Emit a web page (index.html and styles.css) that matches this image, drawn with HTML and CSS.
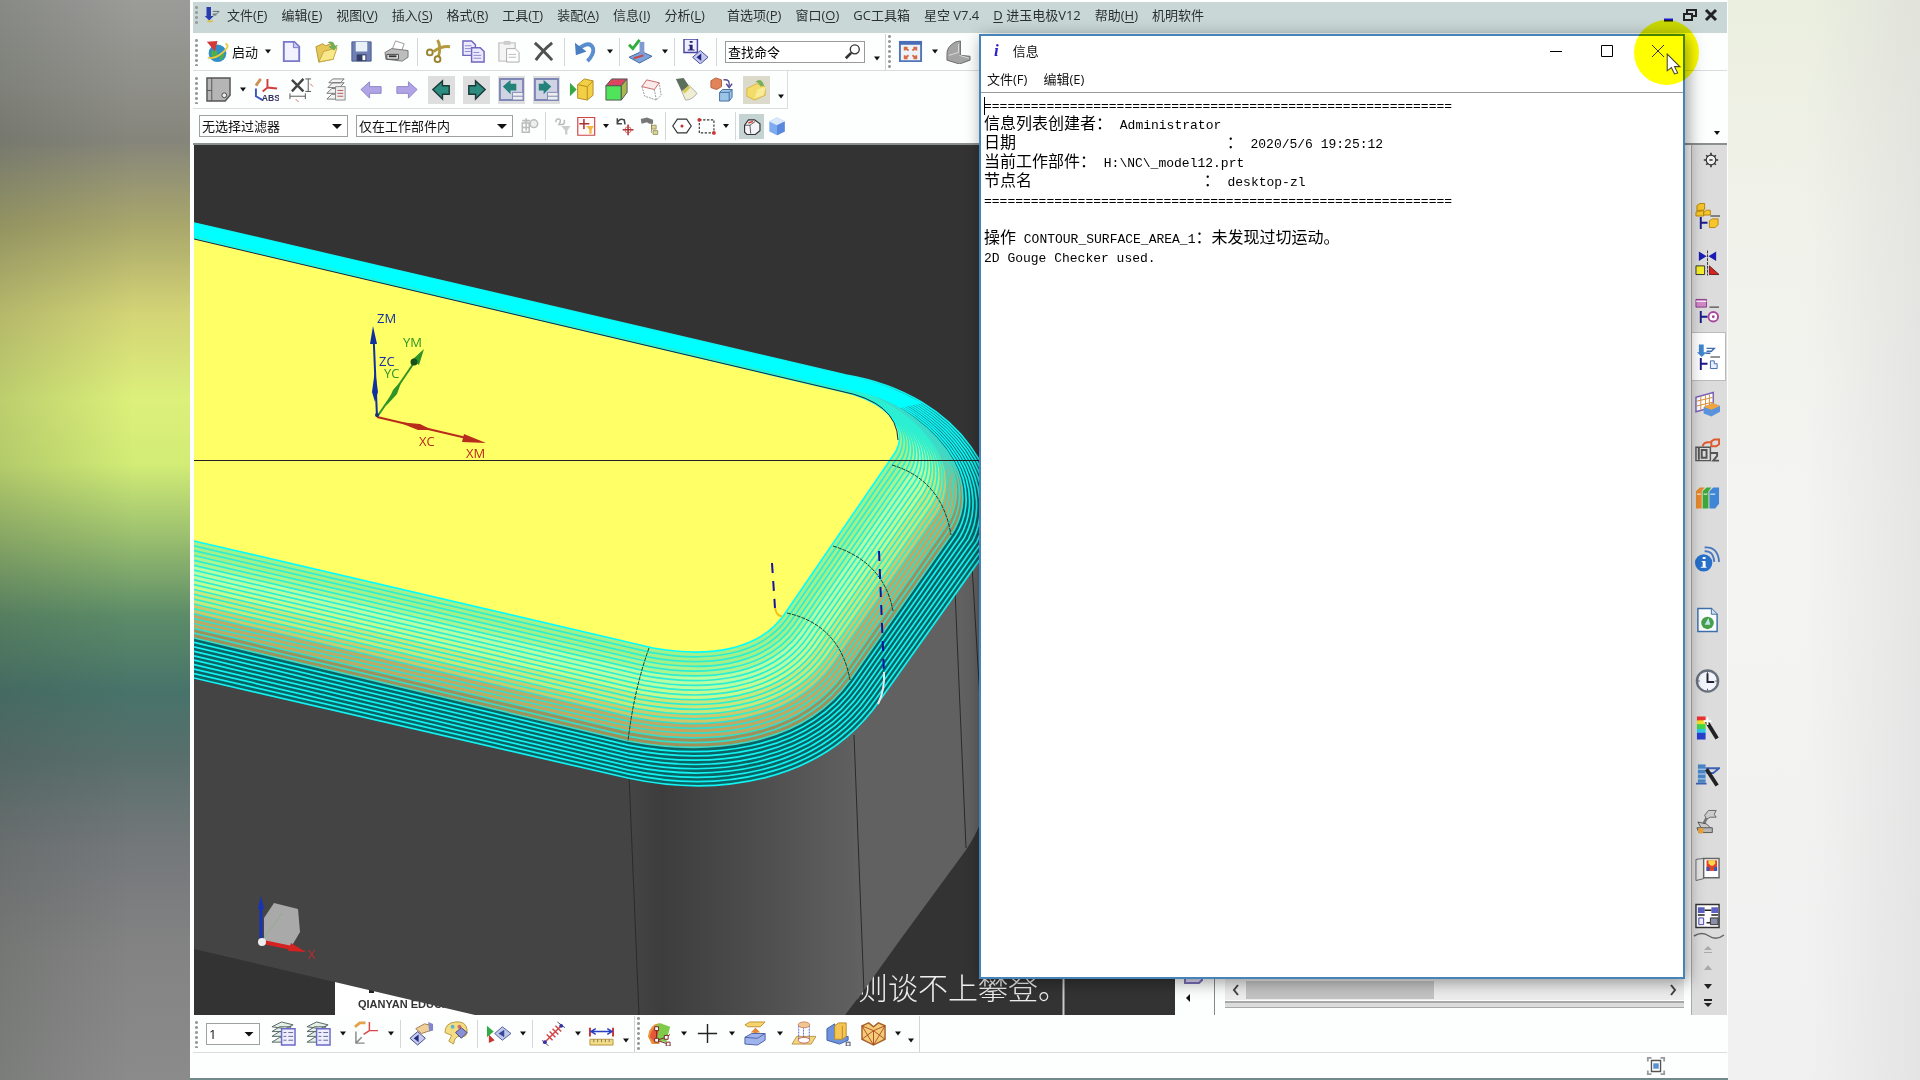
FILE: index.html
```html
<!DOCTYPE html>
<html lang="zh-CN">
<head>
<meta charset="utf-8">
<title>NX 加工</title>
<link rel="stylesheet" href="styles.css">
</head>
<body>
<div class="desk">
<div class="backdrop backdrop-left"></div>
<main class="app">
  <nav class="menubar">
    <i class="grip"></i>
    <svg class="logo" viewBox="0 0 20 20"><path d="M5 1h5v10h3l-5 5-5-5h2z" fill="#2a3cae"/><path d="M12 6h7l-3 3h-4M12 10h4" stroke="#55606e" fill="none"/><path d="M6 17h6" stroke="#d8c040" stroke-width="2"/></svg>
    <a href="#">文件(<u>F</u>)</a><a href="#">编辑(<u>E</u>)</a><a href="#">视图(<u>V</u>)</a><a href="#">插入(<u>S</u>)</a><a href="#">格式(<u>R</u>)</a><a href="#">工具(<u>T</u>)</a><a href="#">装配(<u>A</u>)</a><a href="#">信息(<u>I</u>)</a><a href="#" class="group-end">分析(<u>L</u>)</a><a href="#">首选项(<u>P</u>)</a><a href="#">窗口(<u>O</u>)</a><a href="#">GC工具箱</a><a href="#">星空 V7.4</a><a href="#"><u>D</u> 进玉电极V12</a><a href="#">帮助(<u>H</u>)</a><a href="#">机明软件</a>
    <div class="mdi">
      <button aria-label="最小化"><svg viewBox="0 0 14 14"><path d="M2 12h9" stroke="#1a1ac8" stroke-width="3"/></svg></button>
      <button aria-label="还原"><svg viewBox="0 0 14 14"><path d="M4 5V2h9v6h-3M1 6h8v6H1z" fill="none" stroke="#222" stroke-width="2"/></svg></button>
      <button aria-label="关闭"><svg viewBox="0 0 14 14"><path d="M2 2l10 10M12 2L2 12" stroke="#222" stroke-width="3"/></svg></button>
    </div>
  </nav>

  <div class="bar ruled">
    <i class="grip"></i>
    <button class="launch"><svg viewBox="0 0 26 26"><circle cx="13" cy="15" r="10" fill="#2f8fc8"/><path d="M6 13q6-4 7 2t-3 6q-5-2-4-8M15 18l6-4q0 6-5 9z" fill="#4fae48"/><path d="M2 20q8 2 17-6t3-10" stroke="#f0c93c" stroke-width="2" fill="none"/><path d="M1 2l12-1-3 12z" fill="#d23a3a"/></svg>启动<i class="tri"></i></button>
    <button class="tool" aria-label="新建"><svg viewBox="0 0 26 26"><path d="M5 3h11l5 5v15H5z" fill="#f2f2ff" stroke="#7a78c8" stroke-width="2"/><path d="M15 3v6h6" fill="#c9c9f5" stroke="#7a78c8"/></svg></button>
    <button class="tool" aria-label="打开"><svg viewBox="0 0 26 26"><path d="M2 8l7-3 3 2 8-3v17l-15 3z" fill="#e5c75a" stroke="#b79733"/><path d="M5 24l5-11 14-4-4 12z" fill="#f8e889" stroke="#c5a743"/><path d="M14 4q5-4 8 3l3-1-4 6-6-4 3-1q-1-3-4-3" fill="#72ad52"/></svg></button>
    <button class="tool" aria-label="保存"><svg viewBox="0 0 26 26"><path d="M3 3h20v20H3z" fill="#6f7fb4" stroke="#475b92"/><path d="M7 3h12v10H7z" fill="#e8f2f8"/><path d="M8 16h10v7H8z" fill="#333e66"/><path d="M14 17h3v5h-3z" fill="#fff"/></svg></button>
    <button class="tool" aria-label="打印"><svg viewBox="0 0 26 26"><path d="M8 12l4-10 9 3-3 8z" fill="#fff" stroke="#999"/><path d="M1 14l7-4 17 2v7l-6 4-17-2z" fill="#bdbdbd" stroke="#777"/><path d="M3 16h12v5H3z" fill="#eee" stroke="#444"/><path d="M5 18h8" stroke="#333" stroke-width="2"/></svg></button>
    <i class="sep"></i>
    <button class="tool" aria-label="剪切"><svg viewBox="0 0 26 26"><path d="M12 1q4 7 1 17M25 8q-9-1-17 5" stroke="#b49a3e" stroke-width="3" fill="none"/><circle cx="4" cy="14" r="3" fill="none" stroke="#9a8330" stroke-width="2"/><circle cx="12" cy="21" r="3" fill="none" stroke="#9a8330" stroke-width="2"/></svg></button>
    <button class="tool" aria-label="复制"><svg viewBox="0 0 26 26"><g fill="#eceaff" stroke="#6d66bd" stroke-width="1.5"><path d="M2 2h9l4 4v11H2z"/><path d="M11 9h9l4 4v11H11z"/></g><path d="M4 7h7M4 10h7M4 13h6M13 14h6M13 17h8M13 20h8" stroke="#8a86c9"/></svg></button>
    <button class="tool" aria-label="粘贴"><svg viewBox="0 0 26 26"><path d="M3 4h17v19H3z" fill="#f4f4f4" stroke="#c8c8c8" stroke-width="1.5"/><path d="M8 2h7v4H8z" fill="#ccc"/><path d="M11 10h9l4 4v10H11z" fill="#fff" stroke="#aaa"/><path d="M13 16h8M13 19h8" stroke="#bbb"/></svg></button>
    <button class="tool" aria-label="删除"><svg viewBox="0 0 26 26"><path d="M4 4q8 7 18 18M22 4Q12 12 5 22" stroke="#505050" stroke-width="3" fill="none"/></svg></button>
    <i class="sep"></i>
    <button class="tool" aria-label="撤消"><svg viewBox="0 0 26 26"><path d="M6 10q12-9 15 0 1 6-6 13" stroke="#5b8ecf" stroke-width="4" fill="none"/><path d="M2 4l1 13 11-4z" fill="#4a7ec2"/></svg></button><i class="tri"></i>
    <i class="sep"></i>
    <button class="tool" aria-label="完成草图"><svg viewBox="0 0 26 26"><path d="M1 19l13-6 11 5-13 7z" fill="#7ba4dc" stroke="#44679f"/><path d="M12 3h5v15h-5z" fill="#7f9bd2"/><path d="M6 20l10-3" stroke="#c44" stroke-width="2"/><path d="M1 6l4 4 7-9" stroke="#2fae3a" stroke-width="3" fill="none"/></svg></button><i class="tri"></i>
    <i class="sep"></i>
    <button class="tool" aria-label="命令信息"><svg viewBox="0 0 26 26"><path d="M1 0h14v14H1z" fill="#eef" stroke="#4646a0" stroke-width="1.5"/><path d="M7 2h3v2H7zM6 6h4v5h2v1H5v-1h2V7H6z" fill="#222270"/><path d="M18 12l8 7-8 7-8-7z" fill="#c6c9ef" stroke="#444a9c"/><path d="M19 15v8l-5-4z" fill="#222a80"/></svg></button>
    <i class="sep"></i>
    <label class="search"><input type="text" value="查找命令" aria-label="查找命令"><svg viewBox="0 0 20 20"><circle cx="12" cy="7" r="5" fill="none" stroke="#333" stroke-width="1.5"/><path d="M8 11l-6 6" stroke="#333" stroke-width="3"/></svg></label>
    <i class="tri low wide"></i>
    <i class="grip edge"></i>
    <button class="tool" aria-label="适合窗口"><svg viewBox="0 0 26 26"><path d="M2 3h22v20H2z" fill="#eef3fb" stroke="#5276b5" stroke-width="2"/><path d="M1 2h24v4H1z" fill="#4a6eb6"/><g stroke="#d86b46" stroke-width="2" fill="none"><path d="M7 12V9h3M7 9l4 3M16 9h3v3M19 9l-4 3M7 17v3h3M7 20l4-3M16 20h3v-3M19 20l-4-3"/></g></svg></button><i class="tri"></i>
    <button class="tool" aria-label="渲染样式"><svg viewBox="0 0 26 26"><path d="M1 17q-1-9 9-14l5-1v15l10 1v4l-11 4-13-4z" fill="#a4a4a4" stroke="#6a6a6a"/><path d="M3 17l10-3v-9M14 17l10 3" stroke="#ddd" fill="none"/></svg></button>
  </div>

  <div class="bar ruled short">
    <i class="grip"></i>
    <button class="tool" aria-label="视图部分"><svg viewBox="0 0 26 26"><path d="M1 1h24v18l-5 6H1z" fill="#b5b5b5" stroke="#555" stroke-width="1.5"/><path d="M6 1v24M1 14h5" stroke="#555"/><circle cx="19" cy="19" r="2.500" fill="#eee" stroke="#444"/></svg></button><i class="tri"></i>
    <button class="tool" aria-label="对象显示"><svg viewBox="0 0 26 26"><path d="M14 2v9l10 1M14 11l-5 4" stroke="#d43d3d" stroke-width="2" fill="none"/><path d="M2 12v8l7 4" stroke="#3a56c0" stroke-width="2" fill="none"/><path d="M2 9l5-7" stroke="#c9925a" stroke-width="3"/><text x="8" y="25" class="glyph-abs">ABS</text></svg></button>
    <button class="tool" aria-label="删除尺寸"><svg viewBox="0 0 26 26"><path d="M3 3l12 12M15 2L3 15" stroke="#444" stroke-width="2.500"/><path d="M17 2h6M17 15h6M20 2v13M1 17v6M17 17v6M1 20h16" stroke="#555"/><path d="M7 23l3 3M22 7l3 3" stroke="#d66"/></svg></button>
    <button class="tool" aria-label="图层"><svg viewBox="0 0 26 26"><g fill="#f3f3f3" stroke="#777"><path d="M3 23l5-5h10l-5 5zM3 17l5-5h12l-5 5zM4 11l5-5h12l-5 5zM5 6l4-4h12l-4 4z"/></g><path d="M12 10h10v14H12z" fill="#eee" stroke="#888"/><path d="M14 14h6M14 17h6M14 20h6" stroke="#b55"/></svg></button>
    <button class="tool" aria-label="上一个"><svg viewBox="0 0 26 26"><path d="M2 13l9-8v5h12v7H11v5z" fill="#b0a4e6" stroke="#9084c8"/></svg></button>
    <button class="tool" aria-label="下一个"><svg viewBox="0 0 26 26"><path d="M24 13l-9-8v5H3v7h12v5z" fill="#b0a4e6" stroke="#9084c8"/></svg></button>
    <button class="tool on" aria-label="后退"><svg viewBox="0 0 26 26"><path d="M4 13l10-9v5h7v9h-7v5z" fill="#2c8c80" stroke="#1c3a3a" stroke-width="1.500"/></svg></button>
    <button class="tool on" aria-label="前进"><svg viewBox="0 0 26 26"><path d="M22 13L12 4v5H5v9h7v5z" fill="#2c8c80" stroke="#1c3a3a" stroke-width="1.500"/></svg></button>
    <button class="tool on" aria-label="窗口后退"><svg viewBox="0 0 26 26"><path d="M1 2h24v22H1z" fill="#cfd3e4" stroke="#8088b8" stroke-width="2"/><path d="M4 10l8-7v4h6v7h-6v4z" fill="#23837a"/><path d="M14 16h11v8H14zM14 20h11" fill="#eee" stroke="#8088b8"/></svg></button>
    <button class="tool on" aria-label="窗口前进"><svg viewBox="0 0 26 26"><path d="M1 2h24v22H1z" fill="#cfd3e4" stroke="#8088b8" stroke-width="2"/><path d="M18 10l-8-7v4H5v7h5v4z" fill="#23837a"/><path d="M14 16h11v8H14zM14 20h11" fill="#eee" stroke="#8088b8"/></svg></button>
    <button class="tool" aria-label="显示部件"><svg viewBox="0 0 26 26"><path d="M1 6l7 7-7 7z" fill="#34a944"/><path d="M9 8l7-6 9 2v15l-6 5-10-2z" fill="#f3cf45" stroke="#b58d20"/><path d="M9 8l10 2v14M19 10l6-6" stroke="#b58d20" fill="none"/></svg></button>
    <button class="tool" aria-label="着色"><svg viewBox="0 0 26 26"><path d="M2 9h16v15H2z" fill="#4fe45a" stroke="#555"/><path d="M2 9l6-7h16l-6 7z" fill="#d84660" stroke="#555"/><path d="M18 9l6-7v14l-6 8z" fill="#a8b850" stroke="#555"/></svg></button>
    <button class="tool" aria-label="线框"><svg viewBox="0 0 26 26"><path d="M3 10l5-7 13 3-5 7z" fill="#fbeaea" stroke="#c66"/><path d="M3 10l3 10 12 4 5-5-2-13M16 13l2 11" fill="none" stroke="#999" stroke-dasharray="2 1"/></svg></button>
    <button class="tool" aria-label="照明"><svg viewBox="0 0 26 26"><path d="M2 2l8-1 6 9-8 5z" fill="#5b6f5c"/><path d="M8 15l8-6 8 8q-5 7-12 7z" fill="#f0eed2" stroke="#aaa"/><path d="M10 16l6-6" stroke="#d8ca50" stroke-width="3"/></svg></button>
    <button class="tool" aria-label="替换"><svg viewBox="0 0 26 26"><path d="M2 4l5-3 6 2v7l-5 3-6-2z" fill="#e2835a" stroke="#b65f3c"/><path d="M15 3q7-1 6 6M18 7l3 4 3-4" stroke="#554a90" stroke-width="1.500" fill="none"/><path d="M11 16l3-3h10v8l-3 4H11z" fill="#9cc3e8" stroke="#446f9e"/><path d="M11 16h10v9M21 16l3-3" fill="none" stroke="#446f9e"/></svg></button>
    <button class="tool on sand" aria-label="文件夹"><svg viewBox="0 0 26 26"><path d="M3 12l10-5 9 3v9l-11 5-8-4z" fill="#f3dc6a" stroke="#d3b64a"/><path d="M11 22l3-9 9-3-3 9z" fill="#f9ec96"/><path d="M12 5q6-5 9 4l-4 1q-1-4-5-5" fill="#7cae5a"/></svg></button>
    <i class="tri low"></i>
  </div>

  <div class="bar filters">
    <label class="combo w1"><select aria-label="选择过滤器"><option>无选择过滤器</option></select></label>
    <label class="combo w2"><select aria-label="选择范围"><option>仅在工作部件内</option></select></label>
    <button class="tool s first" aria-label="相关"><svg viewBox="0 0 26 26"><path d="M3 9h9v12H3zM3 15h9M8 3v16M3 6h10" stroke="#bbb" fill="none" stroke-width="2"/><circle cx="18" cy="10" r="5" fill="#eee" stroke="#bbb" stroke-width="2"/></svg></button>
    <i class="sep"></i>
    <button class="tool s" aria-label="重置过滤器"><svg viewBox="0 0 26 26"><path d="M5 8q0-5 4-4t0 7h4q4 0 3-6" stroke="#bbb" fill="none" stroke-width="2"/><path d="M12 13h12l-4 6v5h-3v-5z" fill="#ccc"/></svg></button>
    <button class="tool s" aria-label="常规过滤"><svg viewBox="0 0 26 26"><path d="M1 2h22v23H1z" fill="#fffafa" stroke="#c44" stroke-width="1.500"/><path d="M9 4v13M3 10h13" stroke="#a33" stroke-width="2"/><path d="M12 13h10l-3 5v5h-3v-5z" fill="#f2b73e"/></svg></button><i class="tri"></i>
    <button class="tool s" aria-label="恢复"><svg viewBox="0 0 26 26"><path d="M3 3v7h6M3 9q3-7 9-4l1 6" stroke="#444" stroke-width="2" fill="none"/><path d="M17 11v14M10 18h14" stroke="#a33" stroke-width="2"/><circle cx="17" cy="18" r="4" fill="none" stroke="#c44"/></svg></button>
    <button class="tool s" aria-label="查找"><svg viewBox="0 0 26 26"><path d="M1 4l8-2 8 3v5h-5l-3-2-7 2z" fill="#777"/><path d="M15 12h6v5h-6zM17 19h6v5h-6zM15 9v13" fill="#ddd797" stroke="#87834d"/></svg></button>
    <i class="sep"></i>
    <button class="tool s" aria-label="点"><svg viewBox="0 0 26 26"><path d="M7 4h12l6 9-6 9H7l-6-9z" fill="none" stroke="#333" stroke-width="1.500"/><circle cx="13" cy="13" r="2" fill="#b33"/></svg></button>
    <button class="tool s" aria-label="矩形选择"><svg viewBox="0 0 26 26"><path d="M3 5h19v17H3z" fill="none" stroke="#333" stroke-width="1.500" stroke-dasharray="3 2"/><circle cx="3" cy="5" r="2.500" fill="#c33"/><circle cx="22" cy="22" r="2.500" fill="#c33"/></svg></button><i class="tri"></i>
    <i class="sep"></i>
    <button class="tool s on teal" aria-label="体"><svg viewBox="0 0 26 26"><path d="M4 12l5-7h8l7 5v9l-6 5H7l-3-3z" fill="#f4f4f8" stroke="#333" stroke-width="1.500"/><path d="M4 12h7l7-5M11 12l1 11" stroke="#333" fill="none"/><path d="M9 9l6-2" stroke="#d33" stroke-width="2"/></svg></button>
    <button class="tool s" aria-label="透明"><svg viewBox="0 0 26 26"><path d="M3 7l10-5 10 5v13l-10 5-10-5z" fill="#7eaaf0"/><path d="M3 7l10 5 10-5-10-5z" fill="#dbe8fb"/><path d="M13 12l10-5v13l-10 5z" fill="#5a88dd"/></svg></button>
    <i class="tri low end"></i>
  </div>

  <section class="work">
    <svg class="scene" viewBox="194 145 981 870" preserveAspectRatio="xMinYMax slice">
      <defs>
        <linearGradient id="wall" gradientUnits="userSpaceOnUse" x1="628" y1="0" x2="870" y2="0"><stop offset="0" stop-color="#454545"/><stop offset=".14" stop-color="#3d3d3d"/><stop offset=".55" stop-color="#4e4e4e"/><stop offset=".85" stop-color="#5c5c5c"/><stop offset="1" stop-color="#626262"/></linearGradient>
      </defs>
      <rect x="194" y="145" width="981" height="870" fill="#333"/>
      <rect x="335" y="970" width="150" height="45" fill="#fff"/>
      <rect x="369" y="978" width="5" height="15" fill="#222"/>
      <text x="358" y="1008" class="brand">QIANYAN EDUCATION</text>
      <text x="858" y="999" class="caption">则谈不上攀登。</text>
      <path d="M1063.500 975v40" stroke="#ccc" stroke-width="2"/>
      <path d="M194 600V949L475 1015H640V700z" fill="#444"/>
      <path d="M628 700V780L638 1015H845L864 990 858 600z" fill="url(#wall)"/>
      <path d="M850 690L857 1000 900 940 966 850Q979 830 980 822V540z" fill="#616161"/>
      <path d="M629 775L639 1015M854 735L864 992M955 590L966 848M972 565L980 700" stroke="#2b2b2b" fill="none"/>
      <g id="toolpath"></g>
      <g fill="none" stroke="#123c32" stroke-width="1" stroke-dasharray="4 1">
        <path d="M649 648Q634 690 628 741M787 613Q840 625 850 680M833 546Q884 562 893 611M892 465Q942 480 951 535"/>
      </g>
      <path d="M194 239L840 391Q897 402 898 440" fill="none" stroke="#223" />
      <path d="M194 460.500H980" stroke="#222"/>
      <path d="M772 563L775 608M879 551L884 674" stroke="#1414a0" stroke-width="2" stroke-dasharray="10 8"/>
      <path d="M775 608q2 9 7 8" stroke="#f0c020" stroke-width="2" fill="none"/>
      <path d="M884 672Q885 690 878 704" stroke="#e8e8e8" stroke-width="2" fill="none"/>
      <g class="axis">
        <g stroke="#1030a0" fill="#1030a0"><path d="M377 417L373.500 335" stroke-width="2"/><path d="M373 326l4 18h-7zM375 370l3 22-3 10-3-10z" stroke="none"/><text x="377" y="323">ZM</text><text x="379" y="366">ZC</text></g>
        <g stroke="#2f9428" fill="#2f9428"><path d="M377 417L420 354" stroke-width="2"/><path d="M424 349l-5 16-7-5zM402 380l-5 14-11 12 7-16z" stroke="none"/><text x="403" y="347">YM</text><text x="384" y="378">YC</text></g>
        <g stroke="#b82c1c" fill="#b82c1c"><path d="M377 417L475 440" stroke-width="2"/><path d="M486 443l-24-1 2-8zM432 430l-12-6-22-2 20 8z" stroke="none"/><text x="419" y="446">XC</text><text x="466" y="458">XM</text></g>
        <circle cx="414" cy="362" r="3.500" fill="#17501a"/><circle cx="377" cy="415" r="2" fill="#1b2f80"/>
      </g>
      <g class="axis">
        <path d="M264 918l10-15 24 6 2 23-10 17-26-8z" fill="#a9a9a9"/>
        <path d="M264 938l18-25" stroke="#8fae8a"/>
        <path d="M261 940V904" stroke="#1733b8" stroke-width="3"/><path d="M261 896l3 13h-6z" fill="#1733b8"/>
        <path d="M263 942L292 948" stroke="#d42222" stroke-width="4"/><path d="M306 952l-18-1 3-8z" fill="#d42222"/>
        <circle cx="262" cy="942" r="4" fill="#eee"/><text x="308" y="959" fill="#c02c2c">X</text>
      </g>
    </svg>
    <div class="strip"><svg viewBox="0 0 20 20"><path d="M1 1h17v15l-3 3H1z" fill="#dcd8f5" stroke="#7870b8" stroke-width="2"/><path d="M4 6h11M4 10h11M4 14h11" stroke="#555"/></svg><i class="tri back"></i></div>
    <div class="navigator">
      <div class="hscroll"><button aria-label="向左"><svg viewBox="0 0 10 12"><path d="M7 1L3 6l4 5" fill="none" stroke="#444" stroke-width="2"/></svg></button><div class="track"><div class="thumb"></div></div><button aria-label="向右"><svg viewBox="0 0 10 12"><path d="M3 1l4 5-4 5" fill="none" stroke="#444" stroke-width="2"/></svg></button></div>
      <div class="sill"></div>
    </div>
    <aside class="resources">
      <button class="gear" aria-label="选项"><svg viewBox="0 0 20 20"><circle cx="10" cy="10" r="6" fill="#eee" stroke="#333" stroke-width="1.500"/><path d="M10 1v3M10 16v3M1 10h3M16 10h3M4 4l2 2M14 14l2 2M16 4l-2 2M6 14l-2 2M8 10h4" stroke="#333" stroke-width="2"/></svg></button>
      <button aria-label="装配导航器"><svg viewBox="0 0 26 26"><g fill="#f6c62c" stroke="#b8860b"><path d="M2 2l3-2h5v6l-3 2H2zM1 9l3-2h5v6H1zM9 9l3-2h4v5H9zM15 18l3-2h6v6l-3 3h-6z"/></g><path d="M6 14v13M6 20h7" stroke="#1a1a8c" stroke-width="2"/><path d="M16 13h10" stroke="#222"/></svg></button>
      <button aria-label="约束导航器"><svg viewBox="0 0 26 26"><path d="M4 1l8 5-8 5zM22 1l-8 5 8 5z" fill="#1c1cb4"/><path d="M13 0v26" stroke="#333" stroke-dasharray="3 1"/><path d="M1 16h9v9H1z" fill="#f6f02a" stroke="#333"/><path d="M15 16l10 9H15z" fill="#d62222" stroke="#622"/></svg></button>
      <button aria-label="部件导航器"><svg viewBox="0 0 26 26"><path d="M1 2h11v8H1z" fill="#d18ac9" stroke="#8d3a86"/><path d="M1 4h11" stroke="#fff"/><path d="M6 14v13M6 20h7" stroke="#1a1a8c" stroke-width="2"/><path d="M15 10h10" stroke="#222"/><circle cx="19" cy="20" r="5" fill="#fff" stroke="#a8489c" stroke-width="2"/><circle cx="19" cy="20" r="1.500" fill="#a8489c"/></svg></button>
      <button class="current" aria-label="工序导航器"><svg viewBox="0 0 26 26"><path d="M3 0h5v8h3l-5 5-5-5h2z" fill="#3f86d0"/><path d="M11 4h8l-3 3h-5M10 9h5" stroke="#3f6cb0" fill="none" stroke-width="1.500"/><path d="M5 14v13M5 20h7" stroke="#1a1a8c" stroke-width="2"/><path d="M15 13h10" stroke="#222"/><path d="M15 17h4v3h3v5h-7z" fill="#e6f0ff" stroke="#3f6cb0"/></svg></button>
      <button aria-label="加工特征"><svg viewBox="0 0 26 26"><path d="M1 6l18-5v15L1 21z" fill="#fff" stroke="#7a62b8" stroke-width="1.500"/><path d="M2 10l17-4M2 15l17-4M6 5v14M11 4v14M15 3v14" stroke="#d98f3c"/><path d="M9 16l9-4 8 3v6l-9 5-8-3z" fill="#5a93dc"/><path d="M9 16l8 3 9-4-8-3z" fill="#f0a43f"/></svg></button>
      <button aria-label="机床导航器"><svg viewBox="0 0 26 26"><path d="M17 3l3-2h5v5l-3 2h-5zM16 4q-7-1-8 4" fill="none" stroke="#df5a2c" stroke-width="2"/><path d="M1 9h15v14H1z" fill="#ddd" stroke="#555" stroke-width="1.500"/><path d="M4 9v13M7 12h5v8H7zM16 15h7v3l-4 5h6" stroke="#555" stroke-width="2" fill="none"/></svg></button>
      <button aria-label="重用库"><svg viewBox="0 0 26 26"><path d="M1 6l4-4h5L7 6v18H1z" fill="#e88a2c"/><path d="M8 6l4-4h5l-3 4v18H8z" fill="#3ea83a"/><path d="M15 6l4-4h6v17l-4 5h-6z" fill="#3f86d6"/><path d="M2 9h4M9 9h4M16 9h5" stroke="#fff"/></svg></button>
      <button class="gap" aria-label="HD3D"><svg viewBox="0 0 26 26"><circle cx="9" cy="17" r="9" fill="#2770cc"/><path d="M8 11h3v2H8zM7 15h4v6h1v1H6v-1h2v-5H7z" fill="#fff"/><path d="M10 5q9-1 10 11M10 1q14-1 15 15" fill="none" stroke="#4a78c0" stroke-width="2"/></svg></button>
      <button class="gap" aria-label="浏览器"><svg viewBox="0 0 26 26"><path d="M3 1h14l6 6v18H3z" fill="#fbfdff" stroke="#3f6fa8" stroke-width="1.500"/><path d="M17 1v6h6" fill="#cfe0f2" stroke="#3f6fa8"/><circle cx="13" cy="16" r="6.500" fill="#46a04a"/><path d="M10 18l4-7 2 7z" fill="#bfe4ee"/></svg></button>
      <button class="gap" aria-label="历史记录"><svg viewBox="0 0 26 26"><circle cx="13" cy="13" r="11" fill="#f2f6fc" stroke="#67707c" stroke-width="2.500"/><path d="M13 5v9h7" stroke="#223" stroke-width="2" fill="none"/><path d="M13 3v2M13 21v2M3 13h2M21 13h2" stroke="#556"/></svg></button>
      <button aria-label="可视化"><svg viewBox="0 0 26 26"><path d="M2 1h9v5H2z" fill="#e33"/><path d="M2 5h9v5H2z" fill="#f5e12a"/><path d="M2 9h9v6H2z" fill="#45d84a"/><path d="M2 14h9v5H2z" fill="#30c8e8"/><path d="M2 18h9v7H2z" fill="#2a3fd0"/><path d="M12 6l11 18" stroke="#222" stroke-width="4"/><path d="M13 2v8M9 6h8" stroke="#fff" stroke-width="2"/></svg></button>
      <button aria-label="刀轨"><svg viewBox="0 0 26 26"><path d="M3 2h8v19H3z" fill="#4a87c8"/><path d="M11 6h14l-6 5h-7M1 22h11" stroke="#3d62b4" stroke-width="2" fill="none"/><path d="M12 7l11 17" stroke="#222" stroke-width="4"/><path d="M3 7h8M3 12h8M3 17h8" stroke="#c8e0f4"/></svg></button>
      <button aria-label="机器人"><svg viewBox="0 0 26 26"><path d="M10 6l4-5h8l-2 4 2 3h-6l-4 2z" fill="#ccc" stroke="#666"/><path d="M12 9l-4 8" stroke="#777" stroke-width="3"/><path d="M3 13l9 2 4 4-8 3z" fill="#ccc" stroke="#555"/><path d="M2 19h16v5H4z" fill="#b7b7b7" stroke="#555"/><circle cx="6" cy="22" r="3" fill="#e9a13b"/></svg></button>
      <button aria-label="角色"><svg viewBox="0 0 26 26"><path d="M1 3l8-1v21l-8 2z" fill="#e4e4e4" stroke="#666"/><path d="M9 2h16v20H9z" fill="#fff" stroke="#666" stroke-width="1.500"/><path d="M12 4h11v11H12z" fill="#e0432c"/><path d="M14 4h7v3q-3 6-7 0z" fill="#f8d848"/><path d="M12 11h3v4h-3zM20 11h3v4h-3z" fill="#3058b8"/></svg></button>
      <button aria-label="系统"><svg viewBox="0 0 26 26"><path d="M1 1h24v24H1z" fill="#fff" stroke="#333" stroke-width="1.500"/><path d="M3 4h7v6H3zM17 4h7v6h-7z" fill="#5d62c4"/><path d="M10 7h7M3 12h7M17 12h7M12 20h4" stroke="#222" stroke-width="1.500"/><path d="M4 15h5v7H4z" fill="#eef" stroke="#44a"/><path d="M16 15h8v7h-8z" fill="#8a90a8" stroke="#333"/></svg></button>
      <svg class="more" viewBox="0 0 34 76"><path d="M2 4q8-5 15 0t15-1" stroke="#666" stroke-width="1.500" fill="none"/><path d="M12 18l4-4 4 4zM12 20h8v1h-8zM12 38l4-5 4 5z" fill="#aaa"/><path d="M12 52l4 5 4-5zM12 67h8v2h-8zM12 71l4 4 4-4z" fill="#222"/></svg>
    </aside>
  </section>

  <div class="bar ruled bottom">
    <i class="grip"></i>
    <label class="combo w0"><select aria-label="工作图层"><option>1</option></select></label>
    <button class="tool" aria-label="图层设置"><svg viewBox="0 0 26 26"><g fill="#e4efe6" stroke="#566"><path d="M1 22l8-5h12l-7 5zM1 16l8-5h12l-7 5zM1 11l8-5h12l-7 5zM1 6l10-5 12 3-8 4z"/></g><path d="M11 8h14v17H11z" fill="#eef" stroke="#6a6ac8" stroke-width="1.500"/><path d="M13 12h3M13 16h3M13 20h3M18 12h5M18 16h5M18 20h5" stroke="#669"/></svg></button>
    <button class="tool" aria-label="图层视图"><svg viewBox="0 0 26 26"><g fill="#e4efe6" stroke="#566"><path d="M1 22l8-5h12l-7 5zM1 16l8-5h12l-7 5zM1 11l8-5h12l-7 5zM1 6l10-5 12 3-8 4z"/></g><path d="M11 8h14v17H11z" fill="#eef" stroke="#6a6ac8" stroke-width="1.500"/><path d="M13 12h3M13 16h3M13 20h3M18 12h5M18 16h5M18 20h5" stroke="#669"/></svg></button><i class="tri"></i>
    <button class="tool" aria-label="WCS"><svg viewBox="0 0 26 26"><path d="M16 1v9h9M16 10l-6 4" stroke="#d44" stroke-width="1.500" fill="none"/><path d="M2 11v12h9M2 23l6-6" stroke="#888" stroke-width="1.500" fill="none"/><path d="M1 6l5-4h6" stroke="#e5a24b" stroke-width="3" fill="none"/></svg></button><i class="tri"></i>
    <i class="sep"></i>
    <button class="tool" aria-label="选择对象"><svg viewBox="0 0 26 26"><path d="M7 8l9-5 5 1 1 6-9 3z" fill="#f1cf9a" stroke="#a77d4c"/><path d="M20 1l5 2v7l-4 1z" fill="#7f86c9"/><path d="M9 11l8 7-8 7-8-7z" fill="#c6c9ef" stroke="#444a7c"/><path d="M10 14v8l-5-4z" fill="#222a80"/></svg></button>
    <button class="tool" aria-label="编辑显示"><svg viewBox="0 0 26 26"><path d="M1 12Q1 2 12 1t12 8-8 7q-5 0-6 8l-5-3 3-6z" fill="#f3dc83" stroke="#b7983f"/><circle cx="9" cy="6" r="2" fill="#5bb7c7"/><circle cx="16" cy="6" r="2" fill="#d36b6b"/><path d="M18 7l6 5-6 6-6-6z" fill="#8a90d8" stroke="#444a7c"/></svg></button>
    <i class="sep"></i>
    <button class="tool" aria-label="移动对象"><svg viewBox="0 0 26 26"><path d="M1 5l7 6-7 6z" fill="#2fae46"/><path d="M3 14l6 6-6 3z" fill="#c33"/><path d="M17 6l9 7-9 7-8-7z" fill="#bfc8ea" stroke="#53609c"/><path d="M19 9v8l-6-4z" fill="#37489c"/></svg></button><i class="tri"></i>
    <i class="sep"></i>
    <button class="tool" aria-label="测量"><svg viewBox="0 0 26 26"><path d="M4 22L21 5M6 14l6 6M9 11l6 6M12 8l6 6M15 5l6 6" stroke="#d04545" stroke-width="1.500"/><path d="M1 20l7 6M17 1l8 6" stroke="#555"/><circle cx="4" cy="22" r="2" fill="#33a"/><circle cx="21" cy="5" r="2" fill="#33a"/></svg></button><i class="tri"></i>
    <button class="tool" aria-label="测量距离"><svg viewBox="0 0 26 26"><path d="M1 7v9M25 7v9" stroke="#c33" stroke-width="2"/><path d="M2 11h22M7 8l-5 3 5 3M19 8l5 3-5 3" stroke="#2a3fc0" stroke-width="1.500" fill="none"/><path d="M1 19h24v6H1z" fill="#f2dd87" stroke="#b49443"/><path d="M5 19v3M9 19v3M13 19v3M17 19v3M21 19v3" stroke="#875"/></svg></button><i class="tri low"></i>
    <i class="grip edge"></i>
    <button class="tool" aria-label="分析面"><svg viewBox="0 0 26 26"><path d="M1 16Q2 4 13 2v22H5z" fill="#e9903a"/><path d="M8 6q6-5 8-3l8 3-4 16-10-2z" fill="#7ecb4b"/><path d="M3 17q1-8 7-11l2 5-3 12z" fill="#e5573a"/><path d="M10 8v12l10-3 4-3M10 20l12 4" stroke="#722" fill="none"/><path d="M8 6h4v4H8zM8 18h4v4H8zM18 15h4v4h-4zM20 22h4v4h-4z" fill="#fff" stroke="#722"/></svg></button><i class="tri"></i>
    <button class="tool" aria-label="点"><svg viewBox="0 0 26 26"><path d="M13 3v20M3 13h20" stroke="#222" stroke-width="1.500"/></svg></button><i class="tri"></i>
    <button class="tool" aria-label="拉伸"><svg viewBox="0 0 26 26"><path d="M2 4l5-3h16l-5 5H5z" fill="#f7d36b" stroke="#c1913b"/><path d="M13 7l5 5h-3v5h-4v-5H8z" fill="#e58a3a"/><path d="M2 17l7-4h14v7l-8 5-13-1z" fill="#9fb3ec" stroke="#4e61a8"/><path d="M2 17l13 1 8-5" stroke="#4e61a8" fill="none"/></svg></button><i class="tri"></i>
    <button class="tool" aria-label="投影"><svg viewBox="0 0 26 26"><path d="M1 24l5-8h20l-5 8z" fill="#f3d780" stroke="#b79743"/><path d="M8 5v14M19 5v14M13 6v16" stroke="#5560cc" stroke-dasharray="2 1"/><ellipse cx="13.500" cy="4" rx="6" ry="3" fill="#f2c690" stroke="#c86"/><ellipse cx="13.500" cy="20" rx="6" ry="3" fill="#fff" stroke="#c66"/></svg></button>
    <button class="tool" aria-label="实体"><svg viewBox="0 0 26 26"><path d="M1 8l8-5v14l14-1v4l-9 4-13-4z" fill="#6d93dd" stroke="#41629f"/><path d="M9 5l4-3h8v14l-4 3H9z" fill="#f6c654" stroke="#b98a2c"/><path d="M17 5v14" stroke="#b98a2c"/><path d="M21 22h4v4h-4z" fill="#eee" stroke="#446"/></svg></button>
    <button class="tool" aria-label="曲线网格"><svg viewBox="0 0 26 26"><path d="M1 5l7-3 5 4 5-4 7 3v14l-12 6-12-6z" fill="#f3cc76" stroke="#a6622c" stroke-width="1.500"/><path d="M1 5l12 5 12-5M13 10v15M1 19l12-9 12 9M1 5l12 20 12-20" stroke="#b04e2c" fill="none"/></svg></button><i class="tri"></i><i class="tri low"></i><i class="edge"></i>
  </div>
  <footer class="status"><svg viewBox="0 0 22 22"><path d="M2 6V2h4M16 2h4v4M20 16v4h-4M6 20H2v-4" fill="none" stroke="#999" stroke-width="2"/><path d="M6 5h10v12H6z" fill="#fff" stroke="#555" stroke-width="1.500"/><path d="M8 8h6v6H8z" fill="#5a8fd0"/></svg></footer>

  <section class="dialog" role="dialog" aria-label="信息">
    <header class="titlebar"><b class="info">i</b><span>信息</span>
      <div class="controls">
        <button aria-label="最小化"><svg viewBox="0 0 12 12"><path d="M0 6.500h12" stroke="#000"/></svg></button>
        <button aria-label="最大化"><svg viewBox="0 0 12 12"><path d="M.5.5h11v11H.5z" fill="none" stroke="#000"/></svg></button>
        <button aria-label="关闭" class="close"><svg viewBox="0 0 12 12"><path d="M0 0l12 12M12 0L0 12" stroke="#333"/></svg></button>
      </div>
    </header>
    <nav class="dialog-menu"><a href="#">文件(F)</a><a href="#">编辑(E)</a></nav>
<pre class="report">============================================================
<span>信息列表创建者：</span> Administrator
<span>日期</span>                           <span>：</span> 2020/5/6 19:25:12
<span>当前工作部件：</span> H:\NC\_model12.prt
<span>节点名</span>                      <span>：</span> desktop-zl
============================================================

<span>操作</span> CONTOUR_SURFACE_AREA_1<span>：未发现过切运动。</span>
2D Gouge Checker used.</pre>
    <div class="halo"></div>
    <svg class="pointer" viewBox="0 0 14 21"><path d="M1 1v16l4-3 3 6 3-1-3-6h5z" fill="#fff" stroke="#443" stroke-width="1"/></svg>
  </section>
</main>
<div class="backdrop backdrop-right"></div>
</div>
<script src="toolpath.js"></script>
</body>
</html>
```
FILE: styles.css
```css
* { box-sizing: border-box; }
body { margin: 0; background: #f1f1ee; color: #111; font: 13px/18px "Open Sans", "Noto Sans CJK SC", sans-serif; }
button { border: 0; padding: 0; background: none; font: inherit; color: inherit; }
a { color: inherit; text-decoration: none; }
svg { display: block; }
.desk { display: grid; grid-template-columns: 190px minmax(0, 1fr) 192px; height: 100vh; overflow: hidden; }
.backdrop-left { background: linear-gradient(90deg, rgba(60,70,60,.2), transparent 70%), linear-gradient(#9b9b98 0, #8f8f89 8%, #85857b 13%, #a9a76b 21%, #d3d476 29%, #dcf07a 37%, #d2ec76 43%, #98bd6e 50%, #5c8c68 57%, #47736a 64%, #586f6c 70%, #73777a 78%, #838383 88%, #8b8b8b); }
.backdrop-right { background: linear-gradient(90deg, transparent 40%, rgba(215,215,215,.5)), linear-gradient(#ebefdf, #f1f2ea 20%, #f4f4f3 50%, #f1f1f1); }

.app { position: relative; display: flex; flex-direction: column; height: 100vh; padding: 2px 1px 0 3px; background: #fdfefe; border-bottom: 2px solid #71898a; }
.menubar { display: flex; align-items: center; gap: 14px; flex: 0 0 31px; padding-bottom: 6px; background: #c9d8d6; white-space: nowrap; color: #2a3030; }
.menubar u { text-underline-offset: 2px; }
.menubar .grip { height: 20px; margin-right: -14px; }
.menubar .logo { width: 20px; height: 18px; margin-right: -8px; }
.group-end { margin-right: 8px; }
.mdi { display: flex; gap: 7px; margin: 0 9px 0 auto; }
.mdi svg { width: 14px; height: 14px; }

.bar { display: flex; align-items: center; flex: 0 0 38px; white-space: nowrap; }
.ruled { border-bottom: 1px solid #dcdcdc; }
.grip { flex: none; width: 8px; height: 28px; background: radial-gradient(circle, #9a9a9a 1px, transparent 2px) 1px 0 / 5px 5px repeat-y; }
.edge { border-left: 1px solid #d4d4d4; height: 36px; }
.tool { display: grid; place-items: center; flex: none; width: 35px; height: 28px; }
.tool svg, .launch svg { width: 25px; height: 25px; }
.tool.s { width: 25px; height: 25px; }
.tool.s svg { width: 20px; height: 20px; }
.first { margin-left: 4px; }
.tool.on { background: #dedede content-box; padding: 0 4px; }
.tool.on svg { width: 25px; }
.tool.sand { background-color: #dcdacb; }
.tool.teal { padding: 0; background-color: #c5d3d2; }
.launch { display: flex; align-items: center; flex: none; gap: 3px; width: 73px; padding-left: 5px; }
.tri { flex: none; width: 13px; height: 28px; background: #111; clip-path: polygon(4px 12px, 10px 12px, 7px 16px); }
.tri.low { clip-path: polygon(4px 19px, 10px 19px, 7px 23px); }
.tri.wide { margin: 0 2px 0 5px; }
.tri.end { margin: 0 4px 0 auto; }
.sep { flex: none; width: 7px; height: 28px; background: linear-gradient(#d6d6d6, #d6d6d6) 3px 0 / 1px 100% no-repeat; }
.search { display: flex; align-items: center; width: 140px; height: 22px; margin-left: 5px; border: 1px solid #9a9a9a; background: #fff; }
.search input { flex: 1; min-width: 0; border: 0; padding: 0 2px; font: inherit; background: none; outline: 0; }
.search svg { width: 18px; height: 18px; margin-right: 2px; }
.short { width: 595px; border-right: 1px solid #dcdcdc; }
.filters { flex-basis: 36px; padding-left: 6px; border-bottom: 2px solid #8a8f8f; }
.combo { position: relative; flex: none; height: 22px; border: 1px solid #a0a0a0; background: #fff; }
.combo::after { content: ""; position: absolute; right: 5px; top: 8px; width: 10px; height: 5px; background: #111; clip-path: polygon(0 0, 100% 0, 50% 100%); pointer-events: none; }
.combo select { appearance: none; width: 100%; height: 20px; border: 0; padding: 0 2px; background: none; font: inherit; line-height: 18px; color: inherit; }
.w0 { width: 54px; margin: 0 6px 0 5px; }
.w1 { width: 149px; margin-right: 8px; }
.w2 { width: 157px; }

.work { display: flex; flex: 1; min-height: 0; padding-left: 1px; }
.scene { flex: none; width: 981px; height: 100%; background: #333; }
.brand { font: bold 11px "Liberation Sans Narrow", "Liberation Sans", sans-serif; fill: #333; }
.caption { font: 30px "Noto Sans CJK SC", sans-serif; font-weight: 300; fill: #eee; }
.axis text { font: 13px "Open Sans", sans-serif; stroke: none; }
.glyph-abs { font: bold 9px "Liberation Sans", sans-serif; fill: #33335c; }
.strip { display: flex; flex-direction: column; justify-content: flex-end; flex: 0 0 40px; padding: 0 0 3px 9px; border-right: 1px solid #888; }
.strip svg { width: 20px; height: 20px; }
.tri.back { clip-path: polygon(6px 10px, 6px 18px, 2px 14px); }
.navigator { display: flex; flex-direction: column; justify-content: flex-end; flex: 1; padding: 0 7px 7px 10px; }
.hscroll { display: flex; align-items: center; height: 21px; padding: 0 6px; background: #ededed; }
.hscroll button svg { width: 10px; height: 12px; }
.track { flex: 1; margin: 0 5px; }
.thumb { width: 45%; height: 18px; background: #c4c4c4; }
.sill { height: 7px; margin-top: 1px; background: #dcdcdc; border: solid #a8a8a8; border-width: 2px 0 1px; }
.resources { display: flex; flex-direction: column; flex: 0 0 36px; overflow: hidden; background: #dcdcdc; border-left: 1px solid #aaa; }
.resources button { display: grid; place-items: center; flex: 0 0 47px; width: 31px; }
.resources button svg { width: 25px; height: 26px; }
.resources .gear { flex-basis: 30px; margin: 0 0 17px 3px; }
.resources .gear svg { width: 16px; height: 16px; }
.resources .current { width: 33px; background: #fff; box-shadow: 0 0 0 1px #bbb; }
.resources .gap { margin-top: 14px; }
.more { flex: none; width: 34px; height: 76px; margin-top: -7px; }
.bottom .tri.low + .edge { margin-left: 2px; }
.status { display: flex; align-items: center; justify-content: flex-end; flex: 0 0 25px; padding-right: 61px; }
.status svg { width: 20px; height: 20px; }

.dialog { position: absolute; left: 789px; right: 43px; top: 34px; bottom: 99px; display: flex; flex-direction: column; background: #fff; border: 2px solid #4583b8; box-shadow: 3px 3px 16px rgba(0,0,0,.4); }
.titlebar { display: flex; align-items: center; gap: 14px; flex: 0 0 30px; padding-left: 13px; }
.info { font: italic bold 17px "Liberation Serif", serif; color: #2b1fc8; }
.controls { display: flex; gap: 39px; margin: 0 19px 0 auto; }
.controls svg { width: 12px; height: 12px; }
.controls .close { position: relative; z-index: 3; }
.dialog-menu { display: flex; gap: 16px; flex: 0 0 26px; padding: 4px 6px; border-bottom: 1px solid #999; }
.report { margin: 0; padding: 4px 3px; font: 13px/19px "Liberation Mono", monospace; color: #000; }
.report::before { content: ""; float: left; width: 1px; height: 18px; margin-right: -1px; background: #000; }
.report span { font: 16px/1px "Noto Sans CJK SC", sans-serif; }
.halo { position: absolute; right: -16px; top: -16px; width: 65px; height: 65px; border-radius: 50%; background: #ff0; mix-blend-mode: multiply; }
.pointer { position: absolute; right: 2px; top: 17px; width: 15px; height: 22px; z-index: 4; }
```
FILE: toolpath.js
```js
// Contour passes over the edge blend: top rim, tangent line and lowest pass.
const rim = [194,541, 653,648, 704,657, 757,653, 784,615, 895,453, 909,430, 890,402, 840,391, 194,238];
const tangent = [194,638, 628,741, 702,755, 800,750, 850,680, 951,535, 978,495, 965,430, 846,381, 194,228];
const lowest = [194,678, 628,778, 716,797, 822,784, 880,700, 990,545, 1012,490, 965,395, 846,375, 194,223];
const layer = document.getElementById('toolpath');

function mix(a, b, t) {
  return a.map((v, i) => (v + (b[i] - v) * t).toFixed(1));
}

function outline(p) {
  return `M${p[0]} ${p[1]}L${p[2]} ${p[3]}C${p.slice(4, 10).join(' ')}L${p[10]} ${p[11]}C${p.slice(12, 18).join(' ')}L${p[18]} ${p[19]}`;
}

function addPass(points, fill, stroke) {
  const path = document.createElementNS('http://www.w3.org/2000/svg', 'path');
  path.setAttribute('d', outline(points));
  path.setAttribute('fill', fill);
  path.setAttribute('stroke', stroke);
  path.setAttribute('stroke-width', 1.7);
  layer.append(path);
}

const shades = ['#a4f088', '#aaf592', '#b8ffa4', '#c4fa90', '#c8e87c', '#ccc86c', '#c0a860', '#a09058'];
for (let i = 9; i > 0; i--) addPass(mix(tangent, lowest, i / 9), '#0b6464', '#12f2f2');
for (let i = 20; i > 0; i--) {
  addPass(mix(rim, tangent, i / 20), shades[Math.floor((i - 1) * 8 / 20)], i > 14 ? '#38dccb' : '#2cefd2');
}
addPass(rim, '#ffff66', '#00ffff');
// The far side is seen edge-on, so its passes merge into one band.
const far = document.createElementNS('http://www.w3.org/2000/svg', 'path');
far.setAttribute('d', 'M194 223L840 374Q885 383 922 403L900 408Q880 395 840 388L194 236z');
far.setAttribute('fill', '#00ffff');
layer.append(far);
```
